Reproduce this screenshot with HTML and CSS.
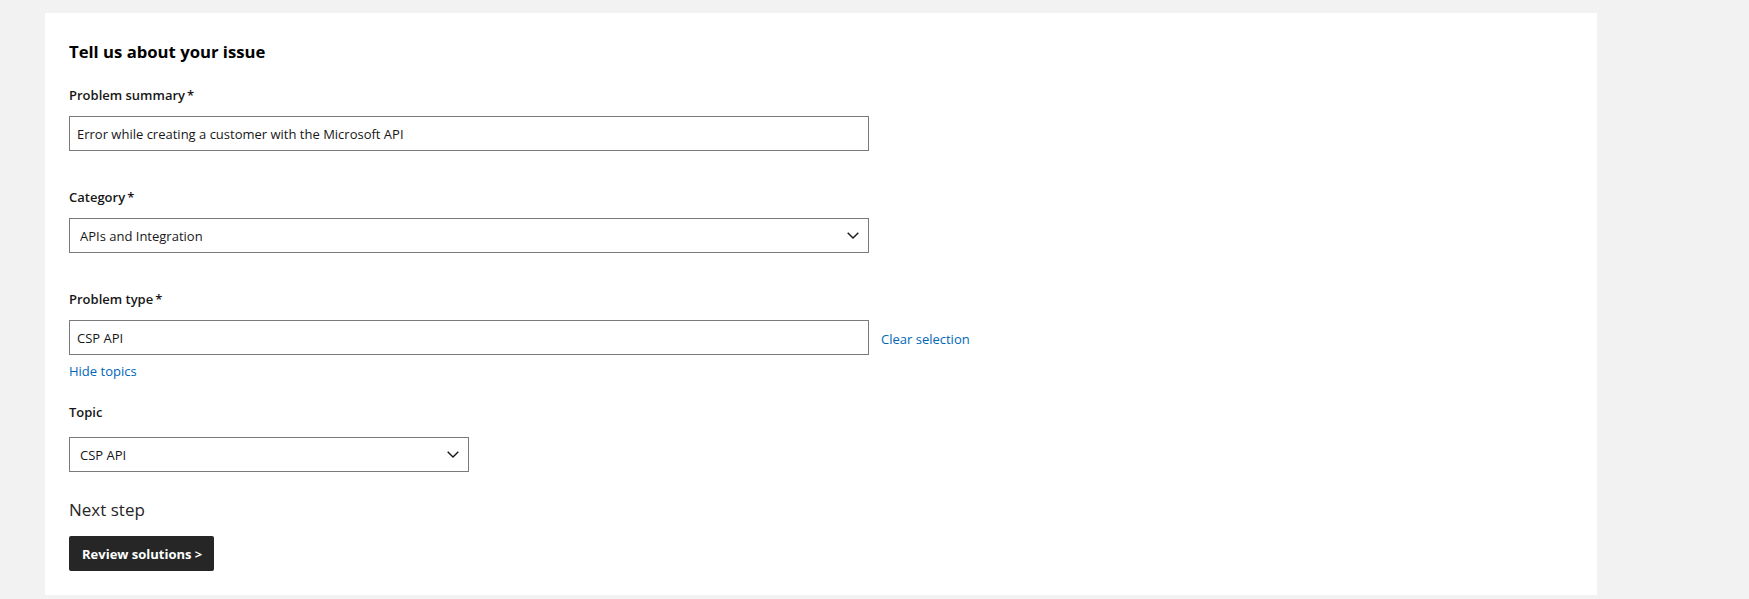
FILE: index.html
```html
<!DOCTYPE html>
<html lang="en">
<head>
    <meta charset="UTF-8">
    <meta name="viewport" content="width=device-width, initial-scale=1.0">
    <title>Tell us about your issue</title>
    <link rel="stylesheet" href="styles.css">
</head>
<body>
    <div class="card">
        <h2 class="title">Tell us about your issue</h2>

        <div class="field">
            <label class="label" for="summary">Problem summary<span class="req">*</span></label>
            <input class="text-input wide" id="summary" type="text" value="Error while creating a customer with the Microsoft API">
        </div>

        <div class="field">
            <div class="label">Category<span class="req">*</span></div>
            <div class="select wide">
                <span>APIs and Integration</span>
                <svg class="chevron" width="12" height="7" viewBox="0 0 12 7"><path d="M0.7 0.7 L6 6 L11.3 0.7" fill="none" stroke="#171717" stroke-width="1.4"/></svg>
            </div>
        </div>

        <div class="field">
            <div class="label">Problem type<span class="req">*</span></div>
            <div class="row">
                <input class="text-input wide" type="text" value="CSP API">
                <a class="link clear" href="#">Clear selection</a>
            </div>
            <a class="link hide" href="#">Hide topics</a>
        </div>

        <div class="field topic">
            <div class="label">Topic</div>
            <div class="select narrow">
                <span>CSP API</span>
                <svg class="chevron" width="12" height="7" viewBox="0 0 12 7"><path d="M0.7 0.7 L6 6 L11.3 0.7" fill="none" stroke="#171717" stroke-width="1.4"/></svg>
            </div>
        </div>

        <div class="next">Next step</div>
        <button class="btn">Review solutions &gt;</button>
    </div>
</body>
</html>
```
FILE: styles.css
```css
body {
    margin: 0;
    padding: 13px 0 0 45px;
    background-color: #f2f2f2;
    font-family: "Open Sans", "Noto Sans", sans-serif;
    color: #171717;
}
.card {
    width: 1552px;
    box-sizing: border-box;
    background: #fff;
    padding: 27px 24px 24px;
}
.title {
    margin: 0 0 21px;
    font-size: 16.7px;
    line-height: 24px;
    font-weight: 700;
    color: #000;
}
.field {
    margin-bottom: 36px;
}
.label {
    display: block;
    font-size: 13px;
    font-weight: 600;
    line-height: 20px;
    margin-bottom: 11px;
}
.req {
    margin-left: 2px;
}
.text-input,
.select {
    box-sizing: border-box;
    height: 35px;
    border: 1px solid #7a7a7a;
    background: #fff;
    font-family: inherit;
    font-size: 13px;
    color: #171717;
}
.text-input {
    display: block;
    padding: 0 7px;
    margin: 0;
    border-radius: 0;
    outline: none;
}
.select {
    display: flex;
    align-items: center;
    justify-content: space-between;
    padding: 0 9px 0 10px;
}
.wide {
    width: 800px;
}
.narrow {
    width: 400px;
}
.row {
    display: flex;
    align-items: center;
    gap: 12px;
}
.link {
    color: #0067b8;
    text-decoration: none;
    font-size: 13px;
    line-height: 20px;
}
.clear {
    margin-top: 2px;
}
.hide {
    display: block;
    margin-top: 6px;
}
.field:has(.hide) {
    margin-bottom: 21px;
}
.topic .label {
    margin-bottom: 15px;
}
.topic {
    margin-bottom: 26px;
}
.next {
    font-size: 17px;
    line-height: 24px;
    margin-bottom: 14px;
    color: #262626;
}
.btn {
    display: block;
    height: 35px;
    padding: 0 12px 0 13px;
    border: none;
    border-radius: 2px;
    background: #262626;
    color: #fff;
    font-family: inherit;
    font-size: 13px;
    font-weight: 700;
    cursor: pointer;
}
```
